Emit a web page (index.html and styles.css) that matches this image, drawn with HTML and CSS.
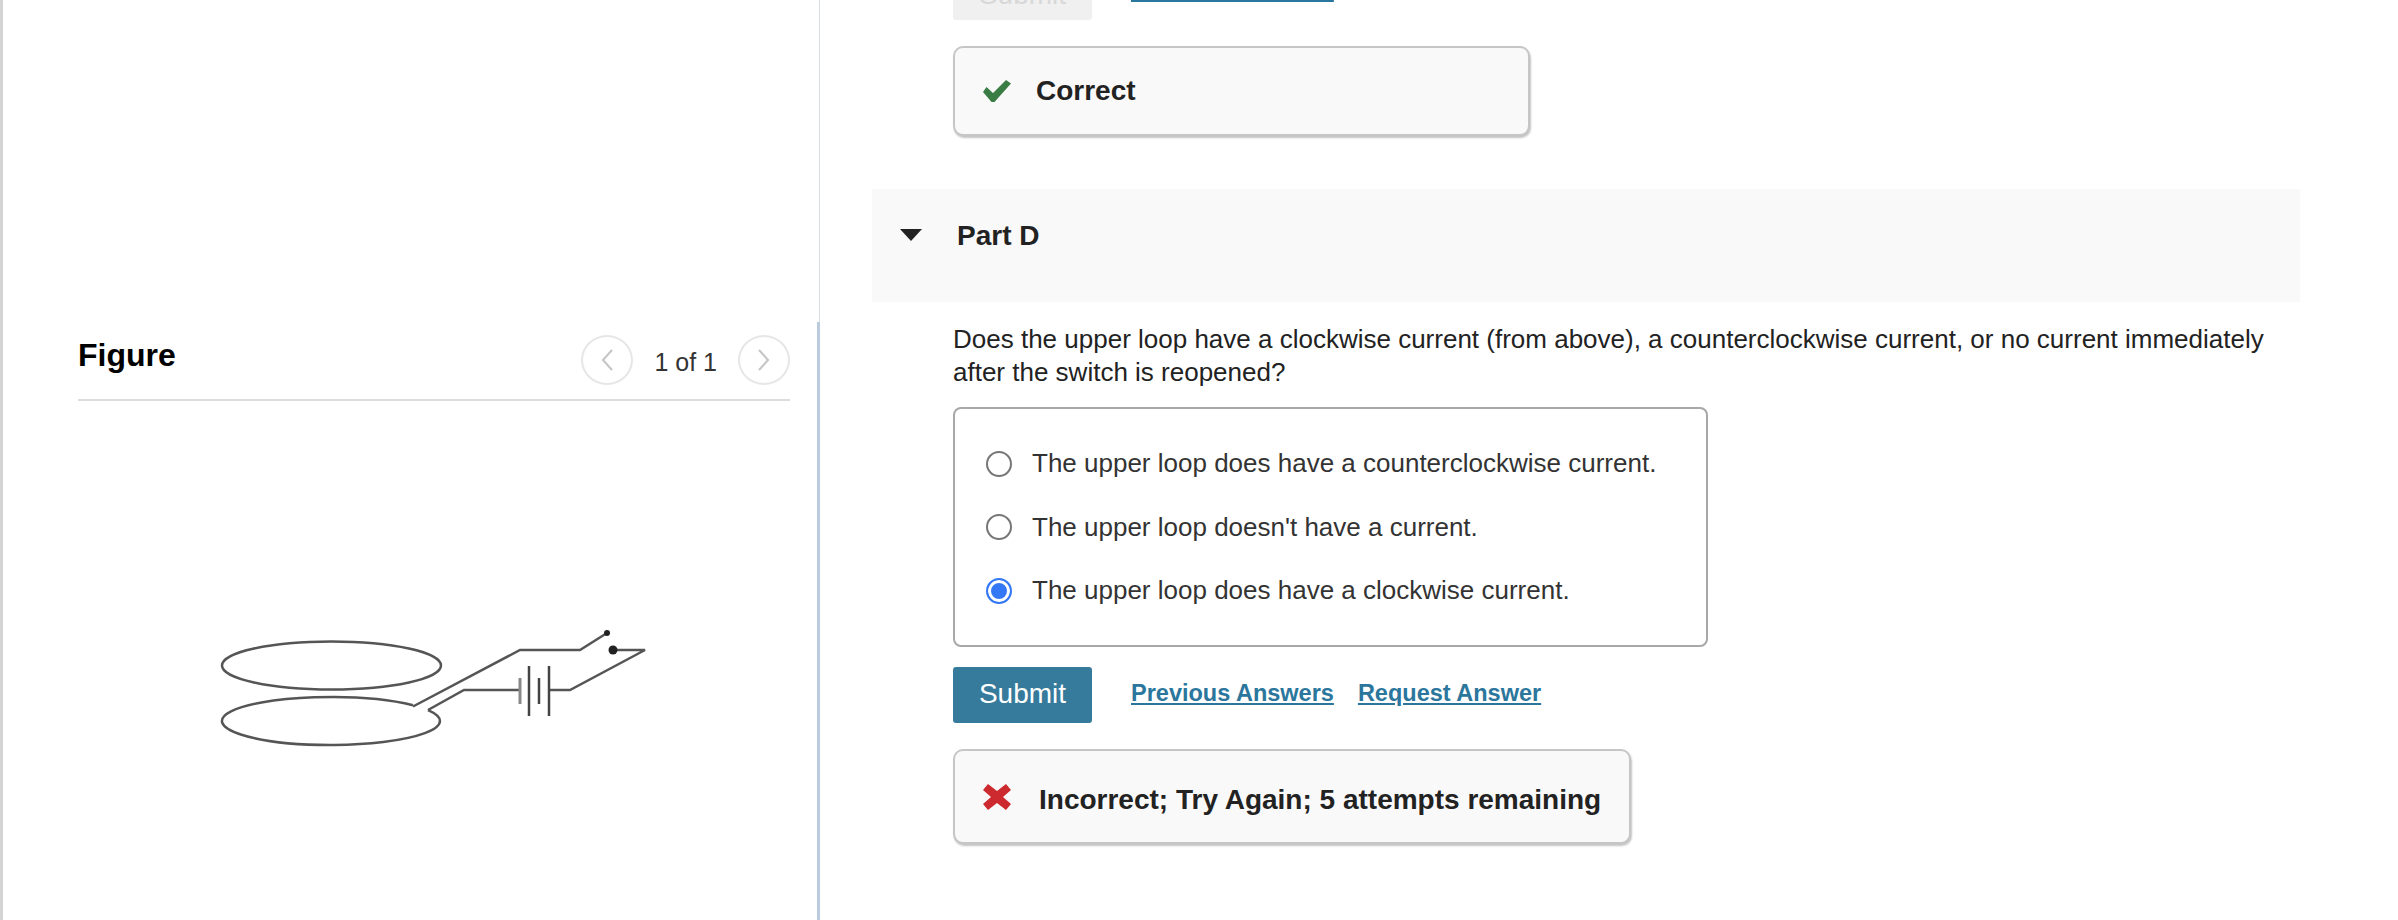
FILE: index.html
```html
<!DOCTYPE html>
<html lang="en">
<head>
<meta charset="utf-8">
<title>Part D</title>
<link rel="stylesheet" href="styles.css">
</head>
<body>
<div class="page">
  <aside class="side">
    <section class="figure-panel">
      <header class="figure-head">
        <h2 class="figure-title">Figure</h2>
        <div class="pager">
          <span class="pager-btn"><svg width="14" height="24" viewBox="0 0 14 24"><path d="M12 2 3 12l9 10" fill="none" stroke="#c4c4c4" stroke-width="2"/></svg></span>
          <span class="pager-text">1 of 1</span>
          <span class="pager-btn"><svg width="14" height="24" viewBox="0 0 14 24"><path d="M2 2l9 10-9 10" fill="none" stroke="#c4c4c4" stroke-width="2"/></svg></span>
        </div>
      </header>
      <svg class="diagram" width="500" height="170" viewBox="0 0 500 170">
        <g fill="none" stroke="#555" stroke-width="2.500">
          <ellipse cx="151.500" cy="65.500" rx="109.500" ry="24"/>
          <path d="M233 105.190A109 24 0 1 0 248 110.060"/>
          <path d="M233 106.500 340 50h60l27-17"/>
          <path d="M433 50h32l-75 40h-21"/>
          <path d="M340 90h-56l-36 20"/>
          <path d="M349 66v50M369 66v50M359 78v26" stroke="#444"/>
          <path d="M340 78v26" stroke="#888" stroke-width="3"/>
        </g>
        <circle cx="427" cy="33" r="3" fill="#222"/>
        <circle cx="433" cy="50" r="4.500" fill="#222"/>
      </svg>
    </section>
  </aside>
  <main class="content">
    <div class="actions actions-top">
      <button class="btn btn-disabled">Submit</button>
      <a class="link" href="#">Previous Answers</a>
    </div>
    <div class="feedback feedback-correct">
      <svg class="feedback-icon" width="28" height="22" viewBox="0 0 28 22"><path d="M0 12l3.500-5 6.500 6L23 0l5 3.500L11.500 22h-3z" fill="#3a7d44"/></svg>
      <strong class="feedback-text">Correct</strong>
    </div>
    <div class="part-head">
      <span class="caret"></span>
      <h3 class="part-title">Part D</h3>
    </div>
    <div class="part-body">
      <p class="question">Does the upper loop have a clockwise current (from above), a counterclockwise current, or no current immediately after the switch is reopened?</p>
      <div class="options">
        <label class="option"><span class="radio"></span>The upper loop does have a counterclockwise current.</label>
        <label class="option"><span class="radio"></span>The upper loop doesn't have a current.</label>
        <label class="option"><span class="radio radio-on"></span>The upper loop does have a clockwise current.</label>
      </div>
      <div class="actions actions-main">
        <button class="btn">Submit</button>
        <a class="link" href="#">Previous Answers</a>
        <a class="link" href="#">Request Answer</a>
      </div>
      <div class="feedback feedback-wrong">
        <svg class="feedback-icon" width="28" height="26" viewBox="0 0 28 26"><path d="M0 6l5-6 9 7 9-7 5 6-8 7 8 7-5 6-9-7-9 7-5-6 8-7z" fill="#cc2a2e"/></svg>
        <strong class="feedback-text">Incorrect; Try Again; 5 attempts remaining</strong>
      </div>
    </div>
  </main>
</div>
</body>
</html>
```

FILE: styles.css
```css
* { box-sizing: border-box; }
html, body { margin: 0; height: 100%; overflow: hidden; background: #fff; }
body { font-family: "Liberation Sans", Arial, sans-serif; color: #222; font-size: 26px; }
.page { display: flex; height: 920px; }
.side {
  width: 820px;
  flex: none;
  padding-top: 322px;
  border-left: 3px solid #d4d4d4;
  border-right: 1px solid #d8dde2;
  display: flex;
}
.figure-panel { flex: 1; margin-right: -1px; border-right: 3px solid #b9cbdc; padding: 13px 27px 0 75px; }
.figure-head { display: flex; align-items: center; justify-content: space-between; height: 66px; border-bottom: 2px solid #ddd; padding-bottom: 15px; }
.figure-title { margin: 0; font-size: 32px; font-weight: 700; color: #000; position: relative; top: -4px; }
.pager { display: flex; align-items: center; gap: 21px; color: #333; }
.pager-btn { width: 52px; height: 50px; border: 2px solid #e6e6e6; border-radius: 50%; display: flex; align-items: center; justify-content: center; }
.pager-text { font-size: 25px; position: relative; top: 3px; }
.diagram { display: block; margin: 199px 0 0 102px; }
.content { flex: 1; padding: 0 98px 0 133px; margin-top: -36px; min-width: 0; }
.actions { display: flex; align-items: center; }
.btn { width: 139px; height: 56px; border: 0; border-radius: 3px; background: #367a9c; color: #fff; font: 28px "Liberation Sans", Arial, sans-serif; padding: 0 0 2px; }
.btn-disabled { background: #f0f0f0; color: #d8d8d8; padding: 5px 0 0; }
.link { font-size: 23.500px; font-weight: 700; color: #2b769c; margin-left: 39px; margin-bottom: 3px; text-decoration: underline; }
.link + .link { margin-left: 24px; }
.feedback { display: flex; align-items: center; background: #f9f9f9; border: 2px solid #c6c6c6; border-radius: 10px; box-shadow: 1px 2px 2px #c4c4c4; font-size: 28px; }
.feedback-icon { flex: none; margin-left: 28px; }
.feedback-correct { width: 577px; height: 90px; margin-top: 26px; }
.feedback-correct .feedback-text { margin-left: 25px; }
.feedback-wrong { width: 678px; height: 95px; margin-top: 26px; }
.feedback-wrong .feedback-text { margin-left: 28px; position: relative; top: 3px; }
.part-head { display: flex; align-items: flex-start; margin: 53px 0 0 -81px; height: 113px; background: #f9f9f9; padding: 31px 0 0 28px; }
.caret { width: 0; height: 0; margin-top: 9px; border-left: 11px solid transparent; border-right: 11px solid transparent; border-top: 12px solid #222; }
.part-title { margin: 0 0 0 35px; font-size: 28px; font-weight: 700; line-height: 32px; }
.part-body { padding-top: 21px; }
.question { margin: 0; font-size: 26px; line-height: 33px; }
.options { width: 755px; height: 240px; margin-top: 18px; padding: 23px 0 0 33px; border: 2px solid #a8a8a8; border-radius: 8px; color: #333; }
.option { display: flex; align-items: center; height: 63.500px; font-size: 26px; }
.radio { width: 26px; height: 26px; flex: none; margin-right: 20px; margin-left: -2px; border: 2px solid #767676; border-radius: 50%; background: #fff; }
.radio-on { border-color: #3478f6; background: #3478f6; box-shadow: inset 0 0 0 3px #fff; }
.actions-main { margin-top: 20px; }
```
